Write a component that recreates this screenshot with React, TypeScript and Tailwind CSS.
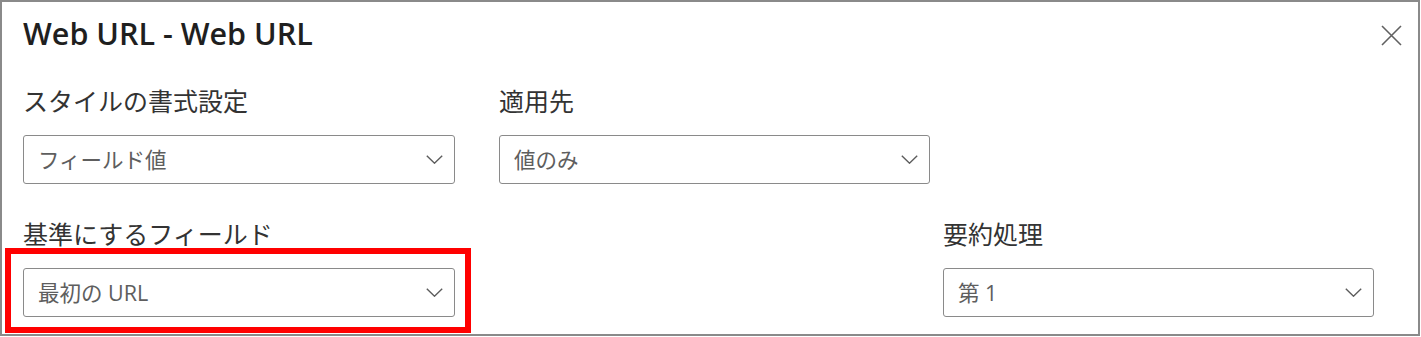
import type { ReactNode } from 'react';

// ── Icons ─────────────────────────────────────────────────────────────────────

function Chevron() {
  return (
    <svg width="17" height="9" viewBox="0 0 17 9" fill="none" className="shrink-0">
      <path d="M0.8 0.8 L8.5 8.2 L16.2 0.8" stroke="#5c5c5c" strokeWidth="1.4" />
    </svg>
  );
}

function CloseIcon() {
  return (
    <svg width="21" height="21" viewBox="0 0 21 21" fill="none">
      <path d="M1 1 L20 20 M20 1 L1 20" stroke="#616161" strokeWidth="1.6" />
    </svg>
  );
}

// ── Dropdown ──────────────────────────────────────────────────────────────────

function Dropdown({ value, width, children }: { value: string; width: string; children?: ReactNode }) {
  return (
    <div className={`relative ${width}`}>
      <div className="flex h-[49px] items-center justify-between rounded-[3px] border-[1.5px] border-[#8a8a8a] bg-white pl-[14px] pr-[11px]">
        <span className="text-[21.5px] leading-none text-[#5e5e5e]">{value}</span>
        <Chevron />
      </div>
      {children}
    </div>
  );
}

function Field({ label, value, width, children }: { label: string; value: string; width: string; children?: ReactNode }) {
  return (
    <div className="flex flex-col">
      <span className="h-[32px] text-[25px] leading-[32px] text-[#333333]">{label}</span>
      <div className="mt-[18px]">
        <Dropdown value={value} width={width}>
          {children}
        </Dropdown>
      </div>
    </div>
  );
}

export default function App() {
  return (
    <div className="h-[336px] w-[1420px] border-2 border-[#8a8a8a] bg-white font-['Open_Sans','Noto_Sans_CJK_JP',sans-serif]">
      {/* Header */}
      <div className="flex items-start justify-between pl-[21px] pr-[16px] pt-[11px]">
        <h1 className="h-[40px] text-[30.5px] font-semibold leading-[40px] text-[#1f1f1f]">Web URL - Web URL</h1>
        <button className="mt-[12px] flex items-center justify-center">
          <CloseIcon />
        </button>
      </div>

      {/* Row 1 */}
      <div className="mt-[32px] flex gap-[44px] pl-[21px]">
        <Field label="スタイルの書式設定" value="フィールド値" width="w-[432px]" />
        <Field label="適用先" value="値のみ" width="w-[431px]" />
      </div>

      {/* Row 2 */}
      <div className="mt-[34px] flex gap-[488px] pl-[21px]">
        <Field label="基準にするフィールド" value="最初の URL" width="w-[432px]">
          <span className="pointer-events-none absolute -bottom-[16px] -left-[18px] -right-[16px] -top-[20px] border-[6px] border-[#ff0000]" />
        </Field>
        <Field label="要約処理" value="第 1" width="w-[431px]" />
      </div>
    </div>
  );
}
